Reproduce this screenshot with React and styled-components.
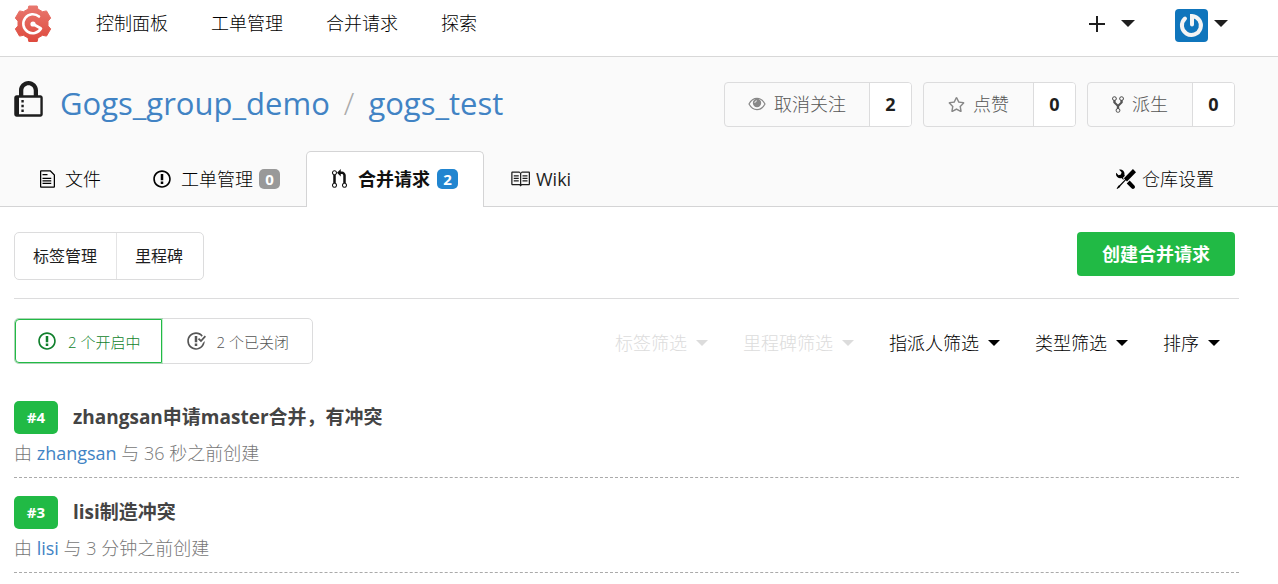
import React from 'react'
import styled, { createGlobalStyle, css } from 'styled-components'
import { FaRegStar } from 'react-icons/fa'

const GlobalStyle = createGlobalStyle`
    * { box-sizing: border-box; }
    body {
        margin: 0;
        background: #fff;
        color: #1e1e1e;
        font-family: "Open Sans", "Noto Sans CJK SC", sans-serif;
        font-size: 18px;
        line-height: 24px;
    }
    a { text-decoration: none; color: inherit; }
    button { font: inherit; color: inherit; background: none; border: 0; padding: 0; cursor: pointer; }
    h1, h2, p, ul { margin: 0; padding: 0; font-weight: 400; }
    ul { list-style: none; }
    svg { display: block; flex: none; }
`

const Row = styled.div`
    display: flex;
    align-items: center;
`
const NavBar = styled.nav`
    display: flex;
    align-items: center;
    height: 57px;
    padding: 0 50px 9px 14px;
    border-bottom: 1px solid #d8d8d8;
`
const NavLinks = styled(Row)`
    flex: 1;
    gap: 43px;
    margin-left: 44px;
    padding-bottom: 2px;
    color: #000;
    font-weight: 300;
`
const NavButton = styled.button`
    display: flex;
    align-items: center;
    gap: ${props => props.$gap}px;
    margin-left: ${props => props.$left || 0}px;
`
const AvatarBox = styled.span`
    margin-top: 4px;
`
const Caret = styled.span`
    border: solid transparent;
    border-width: ${props => (props.$big ? '7px 7px 0' : '6px 6px 0')};
    border-top-color: currentColor;
`
const RepoHeader = styled.header`
    background: #fafafa;
    border-bottom: 1px solid #d4d4d5;
    padding-top: 24px;
`
const TitleRow = styled(Row)`
    justify-content: space-between;
    height: 46px;
    padding: 0 43px 0 14px;
`
const RepoTitle = styled.h1`
    display: flex;
    align-items: center;
    gap: 14px;
    padding-bottom: 2px;
    font-size: 31px;
    line-height: 40px;
    color: #4183c4;
`
const Slash = styled.span`
    color: #aaa;
    font-weight: 300;
`
const LockBox = styled.span`
    color: #1e1e1e;
    margin-right: 3px;
    padding-bottom: 6px;
`
const CountRow = styled(Row)`
    gap: 11px;
`
const CountGroup = styled.div`
    display: flex;
    height: 45px;
    border: 1px solid #dcdcdd;
    border-radius: 4px;
    overflow: hidden;
`
const CountAction = styled.button`
    display: flex;
    align-items: center;
    justify-content: center;
    gap: 8px;
    width: ${props => props.$width}px;
    color: #555;
    font-weight: 300;
`
const CountValue = styled.a`
    display: flex;
    align-items: center;
    justify-content: center;
    width: 42px;
    border-left: 1px solid #dcdcdd;
    background: #fff;
    font-weight: 700;
`
const Tabs = styled.div`
    display: flex;
    height: 56px;
    margin: 24px 43px -1px 14px;
`
const Tab = styled.a`
    display: flex;
    align-items: center;
    gap: ${props => props.$gap || 10}px;
    padding: 0 25px 2px;
    border: 1px solid transparent;
    border-bottom: 0;
    ${props => props.$light && css`
        color: #000;
        font-weight: 300;
    `}
    ${props => props.$active && css`
        background: #fff;
        border-color: #d4d4d5;
        border-radius: 5px 5px 0 0;
        font-weight: 700;
        color: #111;
    `}
    ${props => props.$right && css`
        margin-left: auto;
        padding: 0 20px 2px;
    `}
`
const Badge = styled.span`
    min-width: 21px;
    border-radius: 5px;
    background: ${props => props.$color};
    color: #fff;
    font-size: 15px;
    line-height: 20px;
    font-weight: 700;
    text-align: center;
    margin-left: -4px;
`
const Main = styled.main`
    padding: 25px 39px 0 14px;
`
const Toolbar = styled(Row)`
    justify-content: space-between;
    align-items: flex-start;
    padding: 0 4px 18px 0;
`
const Divider = styled.hr`
    margin: 0;
    border: 0;
    border-top: 1px solid #dcdcdd;
`
const MenuGroup = styled.div`
    display: flex;
    height: 48px;
    border: 1px solid #dcdcdd;
    border-radius: 5px;
    font-size: 16px;
`
const MenuLink = styled.a`
    display: flex;
    align-items: center;
    padding: 0 19px 0 18px;
    & + & { border-left: 1px solid #e4e4e5; }
    &:last-child { padding-right: 20px; }
`
const CreateButton = styled.button`
    height: 44px;
    padding: 0 25px;
    border-radius: 4px;
    background: #21ba45;
    color: #fff;
    font-weight: 700;
`
const FilterRow = styled(Row)`
    justify-content: space-between;
    margin-top: 19px;
`
const StateGroup = styled.div`
    display: flex;
    height: 46px;
    border: 1px solid #dcdcdd;
    border-radius: 5px;
    font-size: 15px;
`
const StateLink = styled.a`
    display: flex;
    align-items: center;
    gap: 10px;
    padding: 0 23px 0 24px;
    color: #555;
    font-weight: 300;
    ${props => props.$active && css`
        gap: 12px;
        padding: 0 21px 0 22px;
        border: 1px solid #21ba45;
        border-radius: 4px 0 0 4px;
        box-shadow: 0 0 0 1px rgba(33, 186, 69, .25);
        color: #0f7f2b;
    `}
`
const StateText = styled.span`
    padding-top: 2px;
`
const Filters = styled(Row)`
    gap: 35px;
    padding: 4px 19px 0 0;
    color: #000;
    font-weight: 300;
`
const FilterButton = styled.button`
    display: flex;
    align-items: center;
    gap: 9px;
    font-weight: inherit;
    &:disabled { color: #dcdcdc; }
`
const IssueList = styled.ul`
    padding-top: 37px;
`
const Issue = styled.li`
    border-bottom: 1px dashed #aaa;
    padding-bottom: 12px;
    & + & { padding-top: 18px; }
`
const IssueHead = styled(Row)`
    gap: 15px;
`
const IssueNumber = styled.span`
    width: 44px;
    border-radius: 5px;
    background: #21ba45;
    color: #fff;
    font-size: 15px;
    line-height: 33px;
    font-weight: 700;
    text-align: center;
`
const IssueTitle = styled.a`
    padding-bottom: 2px;
    color: #444;
    font-size: 19px;
    font-weight: 700;
`
const IssueMeta = styled.p`
    margin-top: 7px;
    color: #777;
    font-weight: 300;
    a { color: #4183c4; font-weight: 400; }
`

// [viewBox width, path], all on a 16 unit high grid
const ICONS = {
    file: [12, 'M6 5H2V4h4v1zM2 8h7V7H2v1zm0 2h7V9H2v1zm0 2h7v-1H2v1zm10-7.5V14c0 .55-.45 1-1 1H1c-.55 0-1-.45-1-1V2c0-.55.45-1 1-1h7.5L12 4.5zM11 5L8 2H1v12h10V5z'],
    issue: [14, 'M7 2.3c3.14 0 5.7 2.56 5.7 5.7s-2.56 5.7-5.7 5.7A5.71 5.71 0 0 1 1.3 8c0-3.14 2.56-5.7 5.7-5.7zM7 1C3.14 1 0 4.14 0 8s3.14 7 7 7 7-3.14 7-7-3.14-7-7-7zm1 3H6v5h2V4zm0 6H6v2h2v-2z'],
    issueClosed: [16, 'M7 10h2v2H7v-2zm2-6H7v5h2V4zm1.5 1.5l-1 1L12 9l4-4.5-1-1L12 7l-1.5-1.5zM8 13.7A5.71 5.71 0 0 1 2.3 8c0-3.14 2.56-5.7 5.7-5.7 1.83 0 3.45.88 4.5 2.2l.92-.92A6.947 6.947 0 0 0 8 1C4.14 1 1 4.14 1 8s3.14 7 7 7 7-3.14 7-7l-1.52 1.52c-.66 2.41-2.86 4.19-5.48 4.19v-.01z'],
    pull: [12, 'M11 11.28V5c-.03-.78-.34-1.47-.94-2.06C9.46 2.35 8.78 2.03 8 2H7V0L4 3l3 3V4h1c.27.02.48.11.69.31.21.2.3.42.31.69v6.28A1.993 1.993 0 0 0 10 15a1.993 1.993 0 0 0 1-3.72zm-1 2.92c-.66 0-1.2-.55-1.2-1.2 0-.65.55-1.2 1.2-1.2.65 0 1.2.55 1.2 1.2 0 .65-.55 1.2-1.2 1.2zM4 3c0-1.11-.89-2-2-2a1.993 1.993 0 0 0-1 3.72v6.56A1.993 1.993 0 0 0 2 15a1.993 1.993 0 0 0 1-3.72V4.72c.59-.34 1-.98 1-1.72zm-.8 10c0 .66-.55 1.2-1.2 1.2-.65 0-1.2-.55-1.2-1.2 0-.65.55-1.2 1.2-1.2.65 0 1.2.55 1.2 1.2zM2 4.2C1.34 4.2.8 3.65.8 3c0-.65.55-1.2 1.2-1.2.65 0 1.2.55 1.2 1.2 0 .65-.55 1.2-1.2 1.2z'],
    book: [16, 'M3 5h4v1H3V5zm0 3h4V7H3v1zm0 2h4V9H3v1zm11-5h-4v1h4V5zm0 2h-4v1h4V7zm0 2h-4v1h4V9zm2-6v9c0 .55-.45 1-1 1H9.5l-1 1-1-1H2c-.55 0-1-.45-1-1V3c0-.55.45-1 1-1h5.5l1 1 1-1H15c.55 0 1 .45 1 1zm-8 .5L7.5 3H2v9h6V3.5zm7-.5H9.5l-.5.5V12h6V3z'],
    tools: [16, 'M4.48 7.27c.26.26 1.28 1.33 1.28 1.33l.56-.58-.88-.91 1.69-1.8s-.76-.74-.43-.45c.32-1.19.03-2.51-.87-3.44C4.93.5 3.66.2 2.52.51l1.93 2-.51 1.96-1.89.52-1.93-1.99C-.19 4.17.1 5.48 1 6.4c.94.98 2.29 1.26 3.48.87zm6.44 1.94l-2.33 2.3 3.84 3.98c.31.33.73.49 1.14.49.41 0 .82-.16 1.14-.49.63-.65.63-1.7 0-2.35l-3.79-3.93zM16 2.53L13.55 0 6.33 7.46l.88.91-4.31 4.46-.99.53-1.39 2.27.35.37 2.2-1.44.51-1.02L7.9 9.08l.88.91L16 2.53z'],
    lock: [12, 'M4 13H3v-1h1v1zm8-6v7c0 .55-.45 1-1 1H1c-.55 0-1-.45-1-1V7c0-.55.45-1 1-1h1V4c0-2.2 1.8-4 4-4s4 1.8 4 4v2h1c.55 0 1 .45 1 1zM3.8 6h4.41V4c0-1.22-.98-2.2-2.2-2.2-1.22 0-2.2.98-2.2 2.2v2H3.8zM11 7H2v7h9V7zM4 8H3v1h1V8zm0 2H3v1h1v-1z'],
    fork: [10, 'M8 1a1.993 1.993 0 0 0-1 3.72V6L5 8 3 6V4.72A1.993 1.993 0 0 0 2 1a1.993 1.993 0 0 0-1 3.72V6.5l3 3v1.78A1.993 1.993 0 0 0 5 15a1.993 1.993 0 0 0 1-3.72V9.5l3-3V4.72A1.993 1.993 0 0 0 8 1zM2 4.2C1.34 4.2.8 3.65.8 3c0-.65.55-1.2 1.2-1.2.65 0 1.2.55 1.2 1.2 0 .65-.55 1.2-1.2 1.2zm3 10c-.66 0-1.2-.55-1.2-1.2 0-.65.55-1.2 1.2-1.2.65 0 1.2.55 1.2 1.2 0 .65-.55 1.2-1.2 1.2zm3-10c-.66 0-1.2-.55-1.2-1.2 0-.65.55-1.2 1.2-1.2.65 0 1.2.55 1.2 1.2 0 .65-.55 1.2-1.2 1.2z'],
}

function Icon({ name, size = 20 }) {
    const [width, path] = ICONS[name]
    return (
        <svg width={Math.round(size * width / 16)} height={size} viewBox={`0 0 ${width} 16`} fill="currentColor" aria-hidden="true">
            <path d={path} />
        </svg>
    )
}

function Logo() {
    return (
        <svg width="38" height="38" viewBox="0 0 38 38" aria-hidden="true">
            <defs>
                <linearGradient id="gear" x1="0" y1="0" x2="0" y2="1">
                    <stop offset="0" stopColor="#e8776e" />
                    <stop offset="1" stopColor="#de4a3e" />
                </linearGradient>
            </defs>
            <path
                fill="url(#gear)"
                stroke="url(#gear)"
                strokeLinejoin="round"
                d="M14.800 1h8.400l.7 3.100 4.700 2.600 3.900-.8 4.200 7.200-2.700 3v4.800l2.700 3-4.200 7.200-3.900-.8-4.700 2.600-.7 3.600h-8.400l-.7-3.600-4.700-2.600-3.900.8-4.200-7.200 2.700-3v-4.800l-2.700-3 4.200-7.200 3.900.8 4.700-2.600z"
            />
            <path fill="none" stroke="#fff" strokeWidth="2.6" strokeLinecap="round" strokeLinejoin="round" d="M25 11.500A9.500 9.500 0 1 0 27 23.500L19 19" />
            <circle cx="19" cy="19" r="2.600" fill="#fff" />
        </svg>
    )
}

function Avatar() {
    return (
        <svg width="33" height="33" viewBox="0 0 33 33" aria-hidden="true">
            <rect width="33" height="33" rx="4" fill="#0f75bc" />
            <path fill="none" stroke="#f4f4f4" strokeWidth="4" strokeLinecap="round" d="M10 9.500a9.500 9.500 0 1 0 7-2.500v8.500" />
        </svg>
    )
}

function Eye() {
    return (
        <svg width="18" height="14" viewBox="0 0 18 14" aria-hidden="true">
            <path fill="none" stroke="#888" strokeWidth="1.2" d="M1 7c4-7.500 12-7.500 16 0c-4 7.500-12 7.500-16 0z" />
            <circle cx="9" cy="6" r="4.200" fill="#888" />
            <path fill="none" stroke="#fff" strokeWidth=".8" d="M6.800 6a2.200 2.200 0 0 1 2.200-2.200" />
        </svg>
    )
}

const counts = [
    { label: '取消关注', icon: <Eye />, value: 2, width: 144 },
    { label: '点赞', icon: <FaRegStar size={17} color="#888" />, value: 0, width: 109 },
    { label: '派生', icon: <Icon name="fork" size={19} />, value: 0, width: 104 },
]

const filters = [
    { label: '标签筛选', disabled: true },
    { label: '里程碑筛选', disabled: true },
    { label: '指派人筛选' },
    { label: '类型筛选' },
    { label: '排序' },
]

const issues = [
    { id: 4, title: 'zhangsan申请master合并，有冲突', user: 'zhangsan', time: '36 秒之前' },
    { id: 3, title: 'lisi制造冲突', user: 'lisi', time: '3 分钟之前' },
]

export default function App() {
    return (
        <>
            <GlobalStyle />
            <NavBar>
                <a href="#home" aria-label="Gogs"><Logo /></a>
                <NavLinks>
                    <a href="#dashboard">控制面板</a>
                    <a href="#issues">工单管理</a>
                    <a href="#pulls">合并请求</a>
                    <a href="#explore">探索</a>
                </NavLinks>
                <NavButton $gap={16} aria-label="创建">
                    <svg width="16" height="16" viewBox="0 0 16 16" stroke="currentColor" strokeWidth="2"><path d="M0 8h16M8 0v16" /></svg>
                    <Caret $big />
                </NavButton>
                <NavButton $gap={6} $left={40} aria-label="用户">
                    <AvatarBox><Avatar /></AvatarBox>
                    <Caret $big />
                </NavButton>
            </NavBar>
            <RepoHeader>
                <TitleRow>
                    <RepoTitle>
                        <LockBox><Icon name="lock" size={38} /></LockBox>
                        <a href="#org">Gogs_group_demo</a>
                        <Slash>/</Slash>
                        <a href="#repo">gogs_test</a>
                    </RepoTitle>
                    <CountRow>
                        {counts.map(item => (
                            <CountGroup key={item.label}>
                                <CountAction $width={item.width}>{item.icon}{item.label}</CountAction>
                                <CountValue href="#count">{item.value}</CountValue>
                            </CountGroup>
                        ))}
                    </CountRow>
                </TitleRow>
                <Tabs>
                    <Tab href="#files" $light><Icon name="file" />文件</Tab>
                    <Tab href="#issues" $light><Icon name="issue" />工单管理<Badge $color="#999">0</Badge></Tab>
                    <Tab href="#pulls" $active $gap={11}><Icon name="pull" />合并请求<Badge $color="#2185d0">2</Badge></Tab>
                    <Tab href="#wiki" $gap={6}><Icon name="book" />Wiki</Tab>
                    <Tab href="#settings" $light $right $gap={6}><Icon name="tools" />仓库设置</Tab>
                </Tabs>
            </RepoHeader>
            <Main>
                <Toolbar>
                    <MenuGroup>
                        <MenuLink href="#labels">标签管理</MenuLink>
                        <MenuLink href="#milestones">里程碑</MenuLink>
                    </MenuGroup>
                    <CreateButton>创建合并请求</CreateButton>
                </Toolbar>
                <Divider />
                <FilterRow>
                    <StateGroup>
                        <StateLink href="#open" $active><Icon name="issue" /><StateText>2 个开启中</StateText></StateLink>
                        <StateLink href="#closed"><Icon name="issueClosed" /><StateText>2 个已关闭</StateText></StateLink>
                    </StateGroup>
                    <Filters>
                        {filters.map(item => (
                            <FilterButton key={item.label} disabled={item.disabled}>{item.label}<Caret /></FilterButton>
                        ))}
                    </Filters>
                </FilterRow>
                <IssueList>
                    {issues.map(item => (
                        <Issue key={item.id}>
                            <IssueHead>
                                <IssueNumber>#{item.id}</IssueNumber>
                                <IssueTitle href="#issue">{item.title}</IssueTitle>
                            </IssueHead>
                            <IssueMeta>由 <a href="#user">{item.user}</a> 与 {item.time}创建</IssueMeta>
                        </Issue>
                    ))}
                </IssueList>
            </Main>
        </>
    )
}
